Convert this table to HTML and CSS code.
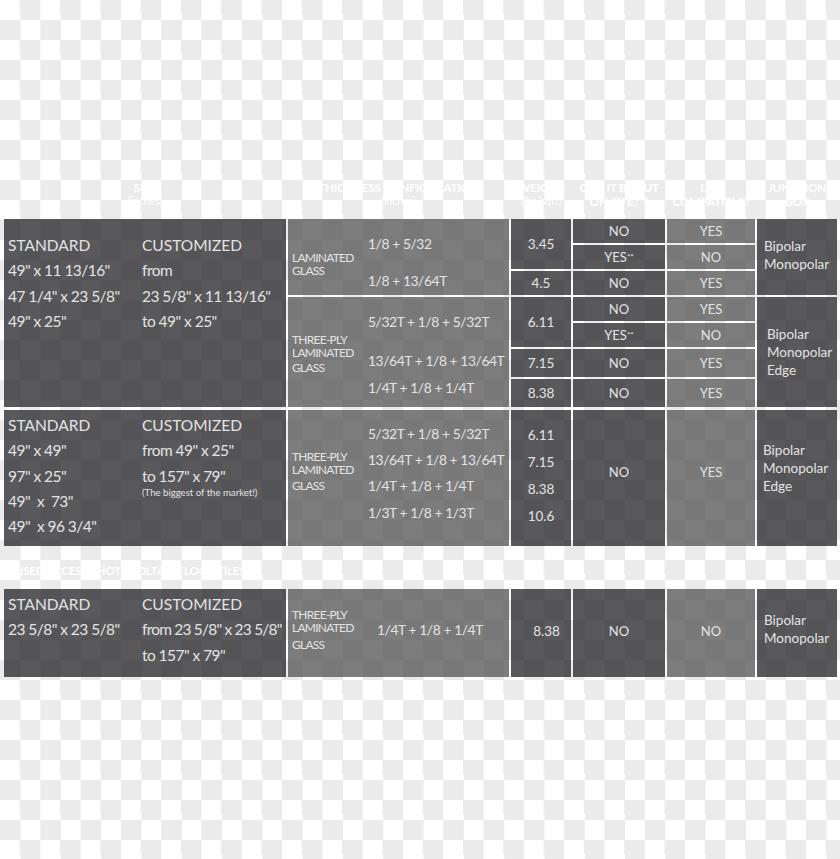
FILE: index.html
```html
<!DOCTYPE html>
<html>
<head>
<meta charset="utf-8">
<link rel="stylesheet" href="styles.css">
</head>
<body>
<div class="page">
  <div class="head">
    <div class="h"><span>SIZE</span><span class="hs">(inches)</span></div>
    <div class="h"><span>THICKNESS CONFIGURATION</span><span class="hs">(inches)</span></div>
    <div class="h"><span>WEIGHT</span><span class="hs">(lbs/sqft)</span></div>
    <div class="h"><span>CAN IT BE CUT</span><span>ON SITE?**</span></div>
    <div class="h"><span>LED</span><span>COMPATIBLE?</span></div>
    <div class="h"><span>JUNCTION</span><span>BOX</span></div>
  </div>

  <div class="grp g1">
    <div class="cell size k1 ra pt-a">
      <div class="szc"><div class="hd">STANDARD</div><div>49" x 11 13/16"</div><div>47 1/4" x 23 5/8"</div><div>49" x 25"</div></div>
      <div class="szc"><div class="hd">CUSTOMIZED</div><div>from</div><div>23 5/8" x 11 13/16"</div><div>to 49" x 25"</div></div>
    </div>

    <div class="cell lt thick k2 r13">
      <div class="lbl lp-a">LAMINATED<br>GLASS</div>
      <div class="vals"><div class="v h50">1/8 + 5/32</div><div class="v h24">1/8 + 13/64T</div></div>
    </div>
    <div class="cell lt thick k2 r47">
      <div class="lbl lp-b">THREE-PLY<br>LAMINATED<br><span class="gl">GLASS</span></div>
      <div class="vals"><div class="v h50">5/32T + 1/8 + 5/32T</div><div class="v h30">13/64T + 1/8 + 13/64T</div><div class="v h22">1/4T + 1/8 + 1/4T</div></div>
    </div>

    <div class="cell num k3 r12">3.45</div>
    <div class="cell num k3 r3">4.5</div>
    <div class="cell num k3 r45">6.11</div>
    <div class="cell num k3 r6">7.15</div>
    <div class="cell num k3 r7">8.38</div>

    <div class="cell yn k4 r1">NO</div>
    <div class="cell yn k4 r2">YES<sup>**</sup></div>
    <div class="cell yn k4 r3">NO</div>
    <div class="cell yn k4 r4">NO</div>
    <div class="cell yn k4 r5">YES<sup>**</sup></div>
    <div class="cell yn k4 r6">NO</div>
    <div class="cell yn k4 r7">NO</div>

    <div class="cell lt yn k5 r1">YES</div>
    <div class="cell lt yn k5 r2">NO</div>
    <div class="cell lt yn k5 r3">YES</div>
    <div class="cell lt yn k5 r4">YES</div>
    <div class="cell lt yn k5 r5">NO</div>
    <div class="cell lt yn k5 r6">YES</div>
    <div class="cell lt yn k5 r7">YES</div>

    <div class="cell jb k6 r13 jb-a">Bipolar<br>Monopolar</div>
    <div class="cell jb k6 r47 jb-b">Bipolar<br>Monopolar<br>Edge</div>
  </div>

  <div class="grp g2">
    <div class="cell size pt-b">
      <div class="szc"><div class="hd">STANDARD</div><div>49" x 49"</div><div>97" x 25"</div><div>49"&nbsp; x&nbsp; 73"</div><div>49"&nbsp; x 96 3/4"</div></div>
      <div class="szc"><div class="hd">CUSTOMIZED</div><div>from 49" x 25"</div><div>to 157" x 79"</div><div class="note">(The biggest of the market!)</div></div>
    </div>
    <div class="cell lt thick">
      <div class="lbl lp-c">THREE-PLY<br>LAMINATED<br><span class="gl2">GLASS</span></div>
      <div class="vals list">
        <div>5/32T + 1/8 + 5/32T</div><div>13/64T + 1/8 + 13/64T</div><div>1/4T + 1/8 + 1/4T</div><div>1/3T + 1/8 + 1/3T</div>
      </div>
    </div>
    <div class="cell numlist"><div>6.11</div><div>7.15</div><div>8.38</div><div>10.6</div></div>
    <div class="cell yn up">NO</div>
    <div class="cell lt yn up">YES</div>
    <div class="cell jb jb-c">Bipolar<br>Monopolar<br>Edge</div>
  </div>

  <div class="title">RAISED ACCESS PHOTOVOLTAIC FLOOR TILES</div>

  <div class="grp g3">
    <div class="cell size pt-b">
      <div class="szc"><div class="hd">STANDARD</div><div>23 5/8" x 23 5/8"</div></div>
      <div class="szc"><div class="hd">CUSTOMIZED</div><div class="tight">from 23 5/8" x 23 5/8"</div><div>to 157" x 79"</div></div>
    </div>
    <div class="cell lt thick">
      <div class="lbl lp-d">THREE-PLY<br>LAMINATED<br><span class="gl3">GLASS</span></div>
      <div class="vals one"><div>1/4T + 1/8 + 1/4T</div></div>
    </div>
    <div class="cell num shift">8.38</div>
    <div class="cell yn">NO</div>
    <div class="cell lt yn">NO</div>
    <div class="cell jb jb-d">Bipolar<br>Monopolar</div>
  </div>
</div>
</body>
</html>
```

FILE: styles.css
```css
html, body {
  margin: 0;
  padding: 0;
}
body {
  min-height: 859px;
  background: repeating-conic-gradient(#ebebeb 0 25%, #ffffff 0 50%) 0 0 / 40.3px 40px;
  font-family: Lato, "Liberation Sans", sans-serif;
  color: #e3e3e3;
}
.page {
  padding: 181px 0 0 4px;
}
.head, .grp {
  display: grid;
  grid-template-columns: 282px 221px 60px 92px 88px 80px;
  column-gap: 2px;
}
.head {
  height: 38px;
  align-items: start;
}
.h {
  display: flex;
  flex-direction: column;
  align-items: center;
  color: #ffffff;
  font-weight: 700;
  font-size: 12px;
  line-height: 13.5px;
  letter-spacing: -0.3px;
  white-space: nowrap;
}
.hs {
  font-weight: 400;
  font-size: 10.5px;
  letter-spacing: 0;
}

.g1 {
  grid-template-rows: 24px 24px 24px 24px 24px 28px 28px;
  row-gap: 2px;
  height: 188px;
}
.g2 {
  margin-top: 3px;
  height: 136px;
}
.g3 {
  height: 88px;
}

.cell {
  background: rgba(34, 34, 36, 0.75);
  min-width: 0;
}
.cell.lt {
  background: rgba(80, 80, 80, 0.74);
}

.k1 { grid-column: 1; }
.k2 { grid-column: 2; }
.k3 { grid-column: 3; }
.k4 { grid-column: 4; }
.k5 { grid-column: 5; }
.k6 { grid-column: 6; }
.ra { grid-row: 1 / 8; }
.r1 { grid-row: 1; }
.r2 { grid-row: 2; }
.r3 { grid-row: 3; }
.r4 { grid-row: 4; }
.r5 { grid-row: 5; }
.r6 { grid-row: 6; }
.r7 { grid-row: 7; }
.r12 { grid-row: 1 / 3; }
.r13 { grid-row: 1 / 4; }
.r45 { grid-row: 4 / 6; }
.r47 { grid-row: 4 / 8; }

/* size column */
.size {
  display: grid;
  grid-template-columns: 134px 1fr;
  align-content: start;
  padding-left: 4px;
  font-size: 15.5px;
  line-height: 25.25px;
  letter-spacing: -0.55px;
  white-space: nowrap;
}
.size .hd {
  letter-spacing: 0;
}
.size .tight {
  letter-spacing: -0.8px;
}
.pt-a { padding-top: 14px; }
.pt-b { padding-top: 3px; }
.note {
  font-size: 9.6px;
  line-height: 8px;
  letter-spacing: 0;
}

/* thickness column */
.thick {
  display: flex;
  align-items: flex-start;
  white-space: nowrap;
}
.lbl {
  width: 80px;
  flex: none;
  box-sizing: border-box;
  padding-left: 4px;
  font-size: 12px;
  line-height: 13.4px;
  letter-spacing: -0.75px;
}
.gl { display: inline-block; margin-top: 1.2px; }
.gl2 { display: inline-block; margin-top: 2.4px; }
.gl3 { display: inline-block; margin-top: 3.2px; }
.lp-a { padding-top: 32px; }
.lp-b { padding-top: 36px; }
.lp-c { padding-top: 40px; }
.lp-d { padding-top: 19px; }
.vals {
  font-size: 13.8px;
  letter-spacing: -0.4px;
}
.v {
  display: flex;
  align-items: center;
}
.h50 { height: 49px; }
.h24 { height: 24px; }
.h30 { height: 29px; }
.h22 { height: 24px; }
.vals.list {
  padding-top: 10.7px;
  line-height: 26.3px;
}
.vals.one {
  padding-top: 32px;
  padding-left: 9px;
}

/* numbers */
.num {
  display: flex;
  align-items: center;
  justify-content: center;
  font-size: 13.5px;
}
.num.shift {
  padding-left: 11px;
  padding-bottom: 4px;
}
.numlist {
  text-align: center;
  font-size: 13.5px;
  line-height: 26.9px;
  padding-top: 12.3px;
}

/* yes / no */
.yn {
  display: flex;
  align-items: center;
  justify-content: center;
  font-size: 13px;
}
.yn.up {
  padding-bottom: 12px;
}
.yn sup {
  font-size: 8px;
  line-height: 0;
  vertical-align: 5px;
}
.g3 .yn {
  padding-bottom: 4px;
}

/* junction box */
.jb {
  display: flex;
  flex-direction: column;
  justify-content: center;
  font-size: 13.5px;
  line-height: 18.3px;
  white-space: nowrap;
}
.jb-a { padding-left: 7px; padding-bottom: 4px; }
.jb-b { padding-left: 10px; }
.jb-c { padding-left: 6px; padding-bottom: 20px; }
.jb-d { padding-left: 7px; padding-bottom: 8px; }

.title {
  height: 43px;
  box-sizing: border-box;
  padding: 17.5px 0 0 1px;
  color: #ffffff;
  font-weight: 700;
  font-size: 11.5px;
  line-height: 14px;
  letter-spacing: -0.2px;
  white-space: nowrap;
}
```
